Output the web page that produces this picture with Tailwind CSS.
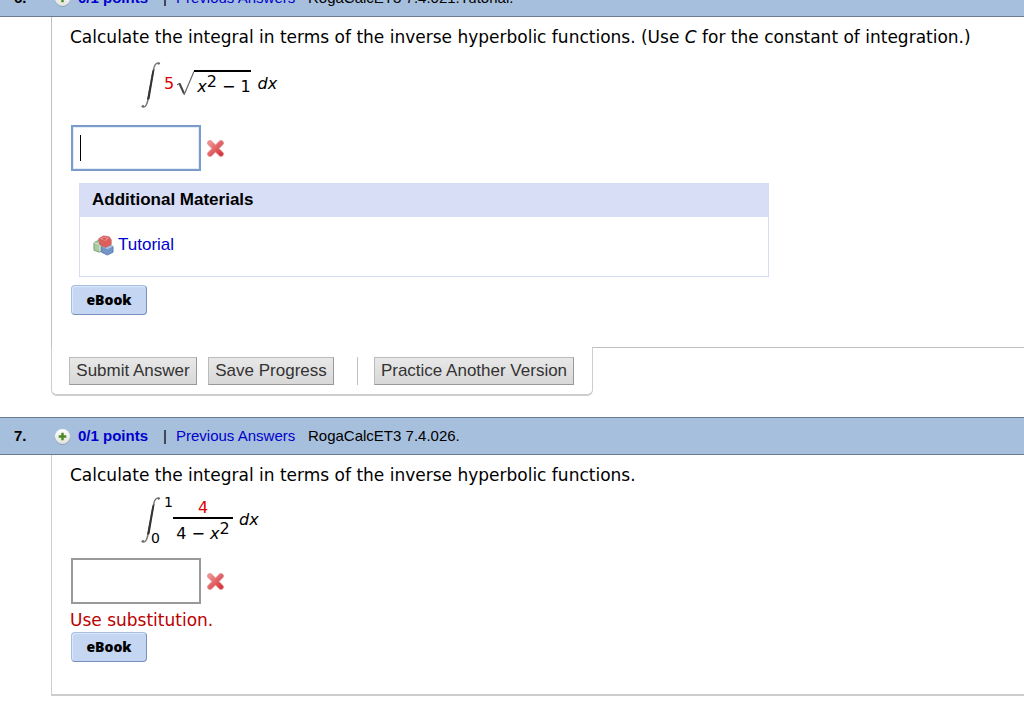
<!DOCTYPE html>
<html lang="en">
<head>
<meta charset="utf-8">
<title>Homework</title>
<script src="https://cdn.jsdelivr.net/npm/@tailwindcss/browser@4"></script>
</head>
<body class="bg-white text-black text-[17px] overflow-x-hidden font-['Liberation_Sans',Arial,sans-serif]">
<svg class="absolute size-0">
  <defs>
    <linearGradient id="red" x1="0" y1="0" x2="1" y2="1"><stop offset="0" stop-color="#ee8d8d"/><stop offset="1" stop-color="#d63a3f"/></linearGradient>
    <linearGradient id="disc" x1="0" y1="0" x2="0" y2="1"><stop offset="0" stop-color="#ffffff"/><stop offset="1" stop-color="#e2e2de"/></linearGradient>
    <symbol id="plus" viewBox="0 0 18 18"><circle cx="9" cy="9.8" r="8" fill="#8297ae"/><circle cx="9" cy="9" r="8" fill="url(#disc)"/><path d="M9 5v8M5 9h8" stroke="#4c8a23" stroke-width="2.6"/></symbol>
    <symbol id="cross" viewBox="0 0 18 18"><path d="M3.8 3.8l10.4 10.4M14.2 3.8L3.8 14.2" fill="none" stroke="#e49a9c" stroke-width="5.4" stroke-linecap="round"/><path d="M3.8 3.8l10.4 10.4M14.2 3.8L3.8 14.2" fill="none" stroke="url(#red)" stroke-width="4.2" stroke-linecap="round"/></symbol>
    <symbol id="integral" viewBox="0 0 20 48"><path d="M1 45.500c3 1.400 4.600-.6 5.800-6L12.400 9c1-5 2.600-7.800 6-6.800" fill="none" stroke="#777" stroke-width="1.500" stroke-linecap="round"/><path d="M6 39L11.300 10l2.300-2L8.500 38z" fill="#333"/><circle cx="17.600" cy="2.800" r="1" fill="#666"/><circle cx="2" cy="45" r="1" fill="#666"/></symbol>
  </defs>
</svg>

<header class="flex h-[17px] flex-col justify-end overflow-hidden border-b border-[#6a7b8e] bg-[#a6bfdc] text-[15px]">
  <div class="flex h-9 shrink-0 items-center whitespace-pre">
    <b class="w-[54px] pl-[14px]">6.</b>
    <svg class="mr-[7px] size-[17px]"><use href="#plus"/></svg>
    <a href="#" class="w-[72px] font-bold text-[#0000cc]">0/1 points</a>
    <span class="w-[26px] text-center pl-1">|</span>
    <a href="#" class="w-[122px] text-[#0000cc]">Previous Answers</a>
    <span class="ml-[10px]">RogaCalcET3 7.4.021.Tutorial.</span>
  </div>
</header>

<main>
<section class="pl-[51px]">
  <div class="h-[330px] border-l border-[#c0c0c0] pl-[18px] pt-2">
    <p class="whitespace-nowrap font-['DejaVu_Sans',Verdana,sans-serif] leading-6">Calculate the integral in terms of the inverse hyperbolic functions. (Use <i>C</i> for the constant of integration.)</p>
    <div class="mt-3 flex h-12 pl-[71px] font-['DejaVu_Sans',Verdana,sans-serif] text-base leading-6">
      <svg class="h-12 w-5"><use href="#integral"/></svg>
      <span class="ml-[3px] pt-[11px] text-[#dd0000]">5</span>
      <svg class="h-9 w-[20px]" viewBox="0 0 20 36" fill="none"><path d="M3 24l3-2" stroke="#444"/><path d="M5.500 22.500l4.500 10" stroke="#444" stroke-width="2"/><path d="M10 34L20 10.500" stroke="#666" stroke-width="1.200"/></svg>
      <span class="mt-[9px] h-8 whitespace-nowrap border-t-2 border-black pl-[3px] pt-[3px]"><i>x</i><sup class="top-[-5px] text-base leading-none">2</sup> − 1</span>
      <i class="ml-[7px] pt-[11px]">dx</i>
    </div>
    <div class="mt-4 flex h-[46px] items-center pl-px">
      <div class="relative">
        <input aria-label="Answer to question 6" type="text" class="block h-[46px] w-[130px] border-2 border-[#7b9bc8] bg-white px-2 text-base outline-none ring-1 ring-inset ring-[#e5ebfb]">
        <span class="absolute left-[9px] top-[10px] h-[26px] w-px bg-black"></span>
      </div>
      <svg class="ml-[5px] size-[19px]"><use href="#cross"/></svg>
    </div>
    <div class="ml-[9px] mt-3 h-[94px] w-[690px] border border-[#d6dcf5]">
      <h2 class="h-[33px] bg-[#d8def6] pl-[12px] text-[17px] font-bold leading-8">Additional Materials</h2>
      <div class="flex h-[56px] items-center gap-1 pl-[13px]">
        <svg class="size-[21px]" viewBox="0 0 22 22">
          <path d="M1 8l6-3 6 3v7l-6 3-6-2z" fill="#a9cba3" stroke="#74a06f"/><path d="M1 8l6 2v7" fill="none" stroke="#d3e6d0"/>
          <path d="M9 12l6-2 6 2v6l-6 3-6-3z" fill="#7396c9" stroke="#5c80b4"/><path d="M9 12l6 3 6-3-6-2z" fill="#a9c2e4"/>
          <path d="M6 4l5-3 6 1 2 3v5l-6 3-6-3z" fill="#dc5f5e" stroke="#cd6462"/><path d="M7 4l4-2 6 1-4 3z" fill="#ea9592"/><ellipse cx="12" cy="4" rx="2" ry="1" fill="#cf5553"/>
        </svg>
        <a href="#" class="text-[#0000cc]">Tutorial</a>
      </div>
    </div>
    <button type="button" class="ml-px mt-[8px] block h-[30px] w-[76px] rounded border border-[#a9bfdf] border-b-[#7890bd] border-r-[#7890bd] bg-[#c4d6f2] font-['Open_Sans',sans-serif] text-sm font-extrabold leading-6 shadow-[inset_1px_1px_1px_#dce9fc]">eBook</button>
  </div>
  <div class="flex">
    <div class="flex h-[49px] w-[542px] shrink-0 items-start rounded-b-md border-x border-b-2 border-[#cdcdcd] pl-[17px] pt-[10px] text-[#333]">
      <button type="button" class="h-7 w-[128px] whitespace-nowrap border border-[#bbb] border-b-[#999] border-r-[#999] bg-linear-to-b from-[#e8e8e8] to-[#d8d8d8] leading-6">Submit Answer</button>
      <button type="button" class="ml-[11px] h-7 w-[126px] whitespace-nowrap border border-[#bbb] border-b-[#999] border-r-[#999] bg-linear-to-b from-[#e8e8e8] to-[#d8d8d8] leading-6">Save Progress</button>
      <span class="ml-[23px] h-7 w-px bg-[#c0c0c0]"></span>
      <button type="button" class="ml-4 h-7 w-[200px] whitespace-nowrap border border-[#bbb] border-b-[#999] border-r-[#999] bg-linear-to-b from-[#e8e8e8] to-[#d8d8d8] leading-6">Practice Another Version</button>
    </div>
    <div class="flex-1 border-t border-[#c0c0c0]"></div>
  </div>
</section>

<header class="mt-[21px] flex h-[38px] items-center whitespace-pre border-y border-[#6a7b8e] bg-[#a6bfdc] text-[15px]">
  <b class="w-[54px] pl-[14px]">7.</b>
  <svg class="mr-[7px] size-[17px]"><use href="#plus"/></svg>
  <a href="#" class="w-[72px] font-bold text-[#0000cc]">0/1 points</a>
  <span class="w-[26px] text-center pl-1">|</span>
  <a href="#" class="w-[122px] text-[#0000cc]">Previous Answers</a>
  <span class="ml-[10px]">RogaCalcET3 7.4.026.</span>
</header>

<section class="ml-[51px] h-[241px] border-b-2 border-l border-[#cdcdcd] pl-[18px] pt-2 font-['DejaVu_Sans',Verdana,sans-serif]">
  <p class="whitespace-nowrap leading-6">Calculate the integral in terms of the inverse hyperbolic functions.</p>
  <div class="mt-[9px] flex h-12 pl-[71px] text-base leading-6">
    <div class="relative w-8">
      <svg class="h-12 w-5"><use href="#integral"/></svg>
      <span class="absolute left-[23px] top-0 text-sm leading-3">1</span>
      <span class="absolute bottom-0 left-[10px] text-sm leading-3">0</span>
    </div>
    <div class="w-[60px] text-center">
      <div class="h-[23px] border-b-2 border-black text-[#dd0000]">4</div>
      <div class="whitespace-nowrap pt-[3px]">4 − <i>x</i><sup class="top-[-5px] text-base leading-none">2</sup></div>
    </div>
    <i class="ml-[6px] pt-[12px]">dx</i>
  </div>
  <div class="mt-[14px] flex h-[46px] items-center pl-px">
    <input aria-label="Answer to question 7" type="text" class="block h-[46px] w-[130px] border-2 border-[#999] bg-white px-2 text-base">
    <svg class="ml-[5px] size-[19px]"><use href="#cross"/></svg>
  </div>
  <p class="mt-[4px] leading-6 text-[#bb0000]">Use substitution.</p>
  <button type="button" class="ml-px block h-[30px] w-[76px] rounded border border-[#a9bfdf] border-b-[#7890bd] border-r-[#7890bd] bg-[#c4d6f2] font-['Open_Sans',sans-serif] text-sm font-extrabold leading-6 shadow-[inset_1px_1px_1px_#dce9fc]">eBook</button>
</section>
</main>
</body>
</html>
